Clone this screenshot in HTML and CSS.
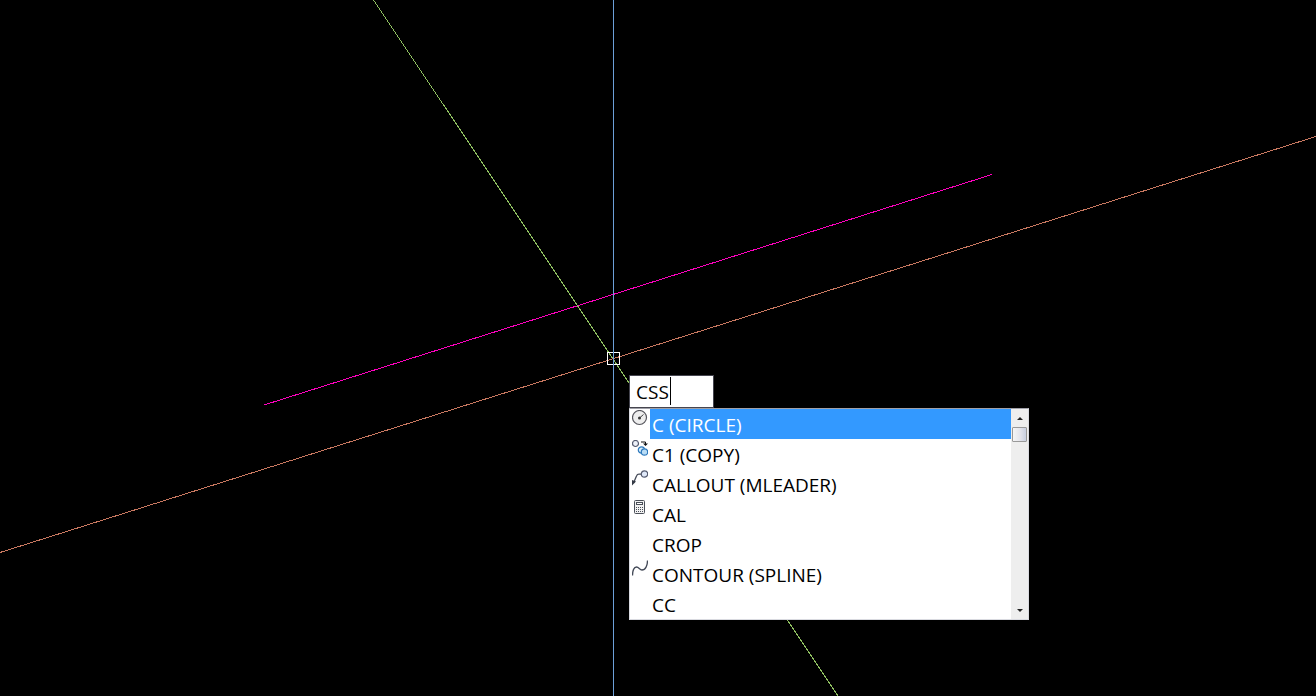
FILE: index.html
```
<!DOCTYPE html>
<html lang="en">
<head>
  <meta charset="UTF-8" />
  <meta name="viewport" content="width=device-width, initial-scale=1.0" />
  <title>Drawing</title>
  <link rel="stylesheet" href="styles.css">
</head>
<body>

  <main class="workspace">
    <!-- Model space -->
    <svg class="drawing" viewBox="0 0 1316 696" preserveAspectRatio="xMinYMin slice" aria-hidden="true">
      <g fill="none" shape-rendering="crispEdges">
        <path class="line" d="M264 405 L992 174.5" />
        <path class="axis-y" d="M373.5 0 L838 696" />
        <path class="axis-x" d="M0 552.5 L1316 136.5" />
        <rect class="pickbox" x="607.5" y="352.5" width="12" height="12" />
        <path class="axis-z" d="M613.5 0 V696" />
      </g>
    </svg>

    <!-- Dynamic input at the cursor -->
    <div class="prompt">
      <div class="entry">
        <input type="text" id="command" value="CSS" aria-label="Command" aria-controls="suggestions" autocomplete="off" spellcheck="false" />
        <span class="caret"></span>
      </div>

      <div class="suggest">
        <ul class="options" id="suggestions" role="listbox" aria-label="Commands">
          <li class="option selected" role="option" aria-selected="true">
            <svg class="icon" viewBox="0 0 16 16">
              <circle cx="7.5" cy="7.5" r="7" fill="#eeeeee" stroke="#55555c" stroke-width="1.2" />
              <circle cx="7.5" cy="8" r="1.5" fill="#333333" />
              <path d="M7.5 8 L11.5 4.5" stroke="#444444" />
            </svg>
            <span>C (CIRCLE)</span>
          </li>
          <li class="option" role="option">
            <svg class="icon" viewBox="0 0 16 16">
              <circle cx="3.5" cy="3.5" r="3" fill="#eef2fa" stroke="#555b70" stroke-width="1.2" />
              <path d="M9 2 H13.5 V4" fill="none" stroke="#111111" />
              <path d="M11 3.5 H16 L13.5 6 Z" fill="#111111" />
              <circle cx="9.5" cy="10" r="3.2" fill="#d5ebfa" stroke="#2d79bd" stroke-width="1.2" />
              <circle cx="12.5" cy="12" r="3.2" fill="#b9dcf5" stroke="#2d79bd" stroke-width="1.2" />
            </svg>
            <span>C1 (COPY)</span>
          </li>
          <li class="option" role="option">
            <svg class="icon" viewBox="0 0 16 16">
              <path d="M1.5 13 L4.5 6 Q5.200 4.200 7 4.200 H9.500" fill="none" stroke="#444a58" stroke-width="1.3" />
              <path d="M0 10 L4 11.5 L0 15.5 Z" fill="#333944" />
              <circle cx="12.5" cy="4" r="3.2" fill="#dfe8f8" stroke="#555b70" stroke-width="1.2" />
            </svg>
            <span>CALLOUT (MLEADER)</span>
          </li>
          <li class="option" role="option">
            <svg class="icon" viewBox="0 0 16 16">
              <rect x="2.5" y="0.5" width="10" height="13" rx="1" fill="#f1f1f1" stroke="#4a4f58" />
              <rect x="4.5" y="2.500" width="6" height="2" fill="#ffffff" stroke="#4a4f58" />
              <path d="M4 7.500 H11 M4 9.500 H11 M4 11.500 H11" stroke="#4a4f58" stroke-dasharray="1 1" />
            </svg>
            <span>CAL</span>
          </li>
          <li class="option" role="option">
            <span class="icon"></span>
            <span>CROP</span>
          </li>
          <li class="option" role="option">
            <svg class="icon" viewBox="0 0 16 16">
              <path d="M0.5 15.5 C0.5 10.5 2 7 4.5 7 C7 7 7.500 10 10 10 C13.500 10 15.500 5.500 15.500 0.5" fill="none" stroke="#444a58" stroke-width="1.3" />
            </svg>
            <span>CONTOUR (SPLINE)</span>
          </li>
          <li class="option" role="option">
            <span class="icon"></span>
            <span>CC</span>
          </li>
        </ul>

        <div class="scrollbar">
          <button type="button" class="arrow" aria-label="Scroll up">
            <svg viewBox="0 0 6 3"><path d="M3 0 L6 3 H0 Z" /></svg>
          </button>
          <div class="thumb"></div>
          <button type="button" class="arrow down" aria-label="Scroll down">
            <svg viewBox="0 0 6 3"><path d="M0 0 H6 L3 3 Z" /></svg>
          </button>
        </div>
      </div>
    </div>
  </main>

</body>
</html>
```
FILE: styles.css
```
* {
  box-sizing: border-box;
}

body {
  margin: 0;
  background-color: #000;
  color: #000;
  font-family: "Open Sans", "Noto Sans", sans-serif;
  font-size: 19px;
}

.workspace {
  position: relative;
  height: 100vh;
  overflow: hidden;
}

/* Drawing */
.drawing {
  display: block;
  width: 100%;
  height: 100%;
}

.line {
  stroke: #ff00bf;
}

.axis-x {
  stroke: #c97860;
}

.axis-y {
  stroke: #8fc060;
}

.axis-z {
  stroke: #6c9fd8;
}

.pickbox {
  stroke: #fff;
}

/* Command prompt, floats beside the cursor */
.prompt {
  position: absolute;
  left: 629px;
  top: 375px;
  width: 400px;
}

.entry {
  position: relative;
  width: 85px;
  height: 33px;
}

.entry input {
  display: block;
  width: 100%;
  height: 100%;
  padding: 0 6px;
  border: 1px solid #45454f;
  border-radius: 0;
  background-color: #fff;
  color: #000;
  font: inherit;
  outline: none;
  caret-color: transparent;
}

.caret {
  position: absolute;
  left: 41px;
  top: 2px;
  width: 1px;
  height: 28px;
  background-color: #000;
}

/* Suggestion list */
.suggest {
  display: flex;
  border: 1px solid #d9dae0;
  border-top-color: #a0a0a8;
  background-color: #fff;
}

.options {
  flex: 1;
  margin: 0;
  padding: 0;
  list-style: none;
}

.option {
  display: flex;
  gap: 2px;
  height: 30px;
  padding-left: 2px;
  line-height: 32px;
  white-space: nowrap;
}

.option span:last-child {
  flex: 1;
  padding-left: 2px;
}

.option.selected span {
  background-color: #3399ff;
  color: #fff;
}

.icon {
  flex: none;
  width: 16px;
  height: 16px;
  margin-top: 1px;
}

/* Scrollbar */
.scrollbar {
  display: flex;
  flex-direction: column;
  width: 17px;
  padding: 0 1px;
  background-color: #eee;
}

.arrow {
  display: flex;
  align-items: center;
  justify-content: center;
  height: 18px;
  padding: 0;
  border: none;
  background: none;
}

.arrow svg {
  width: 6px;
  height: 3px;
  fill: #222;
}

.arrow.down {
  margin-top: auto;
}

.thumb {
  height: 15px;
  border: 1px solid #999;
  border-radius: 1px;
  background: linear-gradient(to right, #f5f5f5, #e6e6ec 50%, #c8cfe0);
}
```
